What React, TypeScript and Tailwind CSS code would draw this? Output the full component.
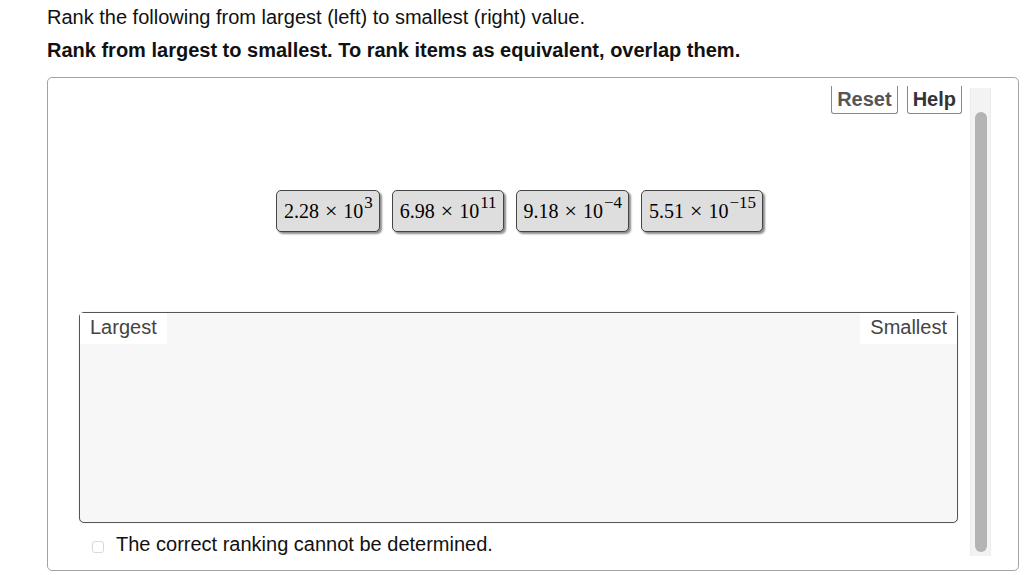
const items = [
  { base: "2.28", exp: "3" },
  { base: "6.98", exp: "11" },
  { base: "9.18", exp: "−4" },
  { base: "5.51", exp: "−15" },
];

function Tile({ base, exp }: { base: string; exp: string }) {
  return (
    <div className="flex h-[42px] items-center rounded-[5px] border border-[#444] bg-[#dedede] pl-[7px] pr-[6px] shadow-[2px_2px_2px_rgba(0,0,0,0.45)] font-['Liberation_Serif',serif] text-[20px] text-black">
      <span>{base}</span>
      <span className="mx-[6px] text-[22px] leading-none">×</span>
      <span>10</span>
      <span className="relative -top-[8px] ml-[1px] text-[17px]">{exp}</span>
    </div>
  );
}

export default function App() {
  return (
    <div className="h-[575px] w-[1024px] overflow-hidden bg-white font-['Liberation_Sans',Arial,sans-serif] text-[#111]">
      <div className="pl-[47px] pt-[6px]">
        <p className="text-[20px] leading-[22px]">
          Rank the following from largest (left) to smallest (right) value.
        </p>
        <p className="mt-[11px] text-[20px] font-bold leading-[22px]">
          Rank from largest to smallest. To rank items as equivalent, overlap them.
        </p>

        {/* outer question box */}
        <div className="mt-[16px] flex h-[494px] w-[972px] rounded-[5px] border-[1.5px] border-[#a3a3a3]">
          <div className="flex flex-1 flex-col pl-[31px] pr-[8px]">
            <div className="flex justify-end gap-[9px] pt-[8px]">
              <button className="h-[28px] rounded-b-[3px] border border-t-0 border-[#888] px-[5px] pb-[2px] text-[20px] font-bold leading-[26px] text-[#555]">
                Reset
              </button>
              <button className="h-[28px] rounded-b-[3px] border border-t-0 border-[#888] px-[5px] pb-[2px] text-[20px] font-bold leading-[26px] text-[#333]">
                Help
              </button>
            </div>

            <div className="mt-[76px] flex justify-center gap-[12px] pr-[2px]">
              {items.map((it) => (
                <Tile key={it.base} base={it.base} exp={it.exp} />
              ))}
            </div>

            <div className="mt-[80px] mr-[4px] flex h-[211px] items-start justify-between rounded-[5px] border border-[#555] bg-[#f7f7f7] shadow-[0_0_1px_rgba(0,0,0,0.3)]">
              <span className="bg-white px-[10px] pt-[3px] pb-[6px] text-[20px] leading-[22px] text-[#444]">
                Largest
              </span>
              <span className="bg-white px-[10px] pt-[3px] pb-[6px] text-[20px] leading-[22px] text-[#444]">
                Smallest
              </span>
            </div>

            <label className="mt-[10px] flex items-center gap-[12px] pl-[13px]">
              <span className="mt-[6px] h-[12px] w-[12px] rounded-[3px] border border-[#d8d8d8] bg-white" />
              <span className="text-[20px] leading-[22px] text-[#111]">
                The correct ranking cannot be determined.
              </span>
            </label>
          </div>

          {/* scrollbar */}
          <div className="mr-[27px] mt-[10px] mb-[14px] flex w-[21px] justify-center border-x border-[#ececec] bg-[#f3f3f3] pt-[24px] pb-[4px]">
            <div className="h-full w-[12px] rounded-full bg-[#b4b4b4]" />
          </div>
        </div>
      </div>
    </div>
  );
}
